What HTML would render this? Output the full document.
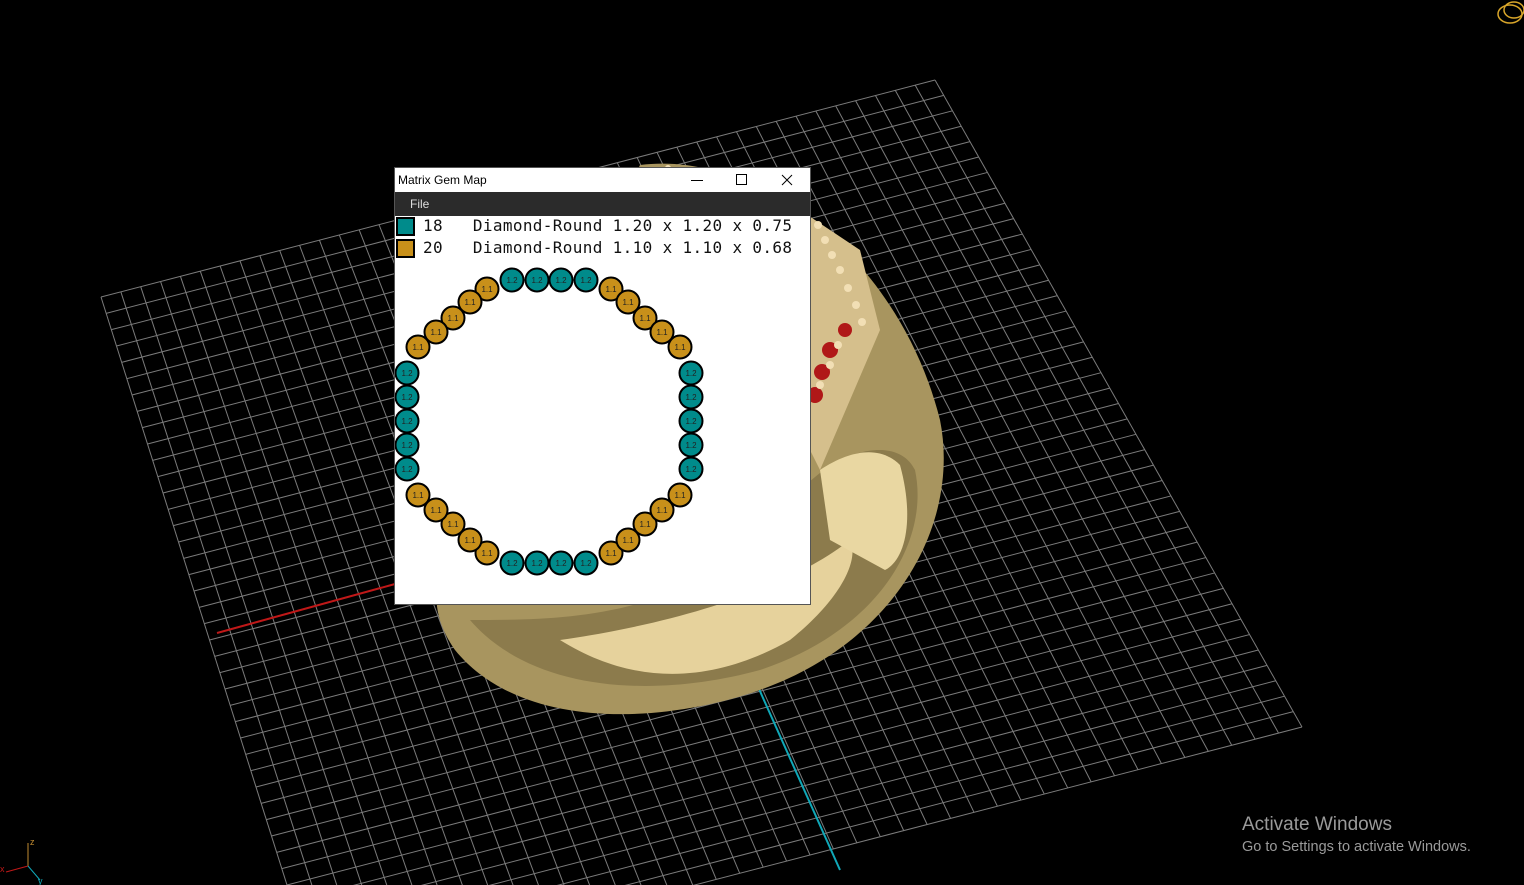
<!DOCTYPE html>
<html><head><style>
html,body{margin:0;padding:0;background:#000;width:1524px;height:885px;overflow:hidden;font-family:"Liberation Sans",sans-serif}
#dlg{position:absolute;left:395px;top:168px;width:415px;height:436px;background:#fff;box-shadow:0 0 0 1px #555}
#title{height:24px;background:#fff;font-size:12px;line-height:24px;padding-left:3px;color:#000;position:relative}
#menu{height:24px;background:#2b2b2b;color:#ddd;font-size:12px;line-height:24px;padding-left:15px}
.leg{position:absolute;left:1px;width:19px;height:19px;border:2px solid #000;box-sizing:border-box}
.lt{position:absolute;left:28px;font-family:"DejaVu Sans Mono","Liberation Mono",monospace;font-size:16px;letter-spacing:0.35px;white-space:pre;color:#111}
.aw{position:absolute;left:1242px;color:#9a9a9a}
</style></head><body>
<svg width="1524" height="885" style="position:absolute;left:0;top:0">
<g id="grid" stroke="#9a9a9a" stroke-width="1" opacity="0.8"></g>
<line x1="217" y1="633" x2="395" y2="584" stroke="#c01818" stroke-width="2"/>
<line x1="755" y1="680" x2="840" y2="870" stroke="#10a8b8" stroke-width="2"/>
<path d="M640 165 C760 150 900 260 940 420 C960 520 900 640 760 690 C660 725 520 730 455 650 C420 600 440 560 470 520 L640 165 Z" fill="#a8955f"/>
<path d="M470 620 C530 690 650 700 760 670 C880 630 930 540 915 470 C900 440 860 450 840 460 C800 480 760 540 700 580 C620 620 540 620 470 620 Z" fill="#8c7b4c"/>
<path d="M560 640 C640 690 720 680 790 640 C840 600 860 560 850 540 C800 580 700 620 560 640 Z" fill="#e6d29c"/>
<path d="M820 470 C850 450 880 445 900 465 C915 520 905 560 885 570 L830 540 Z" fill="#e9d7a2"/>
<path d="M800 210 L860 250 L880 330 L820 470 L800 430 Z" fill="#d5bf8c"/>
<g fill="#b01818"><circle cx="830" cy="350" r="8"/><circle cx="822" cy="372" r="8"/><circle cx="815" cy="395" r="8"/><circle cx="845" cy="330" r="7"/></g>
<g fill="#f2dfb5"><circle cx="818" cy="225" r="4"/><circle cx="825" cy="240" r="4"/><circle cx="832" cy="255" r="4"/><circle cx="840" cy="270" r="4"/><circle cx="848" cy="288" r="4"/><circle cx="856" cy="305" r="4"/><circle cx="862" cy="322" r="4"/><circle cx="838" cy="345" r="4"/><circle cx="830" cy="365" r="4"/><circle cx="820" cy="385" r="4"/><circle cx="656" cy="170" r="3"/><circle cx="668" cy="168" r="3"/></g>
<g stroke="#d9a62a" stroke-width="1.5" fill="none"><ellipse cx="1510" cy="14" rx="12" ry="9"/><ellipse cx="1514" cy="10" rx="10" ry="8"/></g>
<g font-size="9"><line x1="28" y1="843" x2="28" y2="866" stroke="#c08a30"/><line x1="28" y1="866" x2="6" y2="872" stroke="#c01818"/><line x1="28" y1="866" x2="40" y2="880" stroke="#10a8b8"/><text x="30" y="845" fill="#c08a30">z</text><text x="0" y="872" fill="#c01818">x</text><text x="38" y="884" fill="#10a8b8">y</text></g>
</svg>
<div id="dlg">
<div id="title">Matrix Gem Map
<svg width="120" height="24" style="position:absolute;right:0;top:0"><line x1="1" y1="12.5" x2="13" y2="12.5" stroke="#000"/><rect x="46.5" y="6.5" width="10" height="10" fill="none" stroke="#000"/><path d="M92 7 L102 17 M102 7 L92 17" stroke="#000"/></svg></div>
<div id="menu">File</div>
<div class="leg" style="top:49px;background:#008b8b"></div>
<div class="leg" style="top:71px;background:#c8901a"></div>
<div class="lt" style="top:48px">18   Diamond-Round 1.20 x 1.20 x 0.75</div>
<div class="lt" style="top:70px">20   Diamond-Round 1.10 x 1.10 x 0.68</div>
<svg id="gems" width="415" height="436" style="position:absolute;left:0;top:0"></svg>
</div>
<div class="aw" style="top:814px;font-size:19px">Activate Windows</div>
<div class="aw" style="top:839px;font-size:14.5px">Go to Settings to activate Windows.</div>
<script>
(function(){
var g=document.getElementById('grid'),ns='http://www.w3.org/2000/svg';
var A=[935,80],B=[1302,727],C=[318,983],D=[101,297],N=42;
function P(u,v){var x=(1-u)*(1-v)*D[0]+u*(1-v)*A[0]+u*v*B[0]+(1-u)*v*C[0];var y=(1-u)*(1-v)*D[1]+u*(1-v)*A[1]+u*v*B[1]+(1-u)*v*C[1];return [x,y];}
function L(p,q){var l=document.createElementNS(ns,'line');l.setAttribute('x1',p[0]);l.setAttribute('y1',p[1]);l.setAttribute('x2',q[0]);l.setAttribute('y2',q[1]);g.appendChild(l);}
for(var i=0;i<=N;i++){var t=i/N;L(P(t,0),P(t,1));L(P(0,t),P(1,t));}
var s=document.getElementById('gems'),ox=395,oy=168;
function gem(x,y,c,t){var e=document.createElementNS(ns,'circle');e.setAttribute('cx',x-ox);e.setAttribute('cy',y-oy);e.setAttribute('r',11.5);e.setAttribute('fill',c);e.setAttribute('stroke','#000');e.setAttribute('stroke-width','2');s.appendChild(e);var tx=document.createElementNS(ns,'text');tx.setAttribute('x',x-ox);tx.setAttribute('y',y-oy+3);tx.setAttribute('font-size','8');tx.setAttribute('text-anchor','middle');tx.setAttribute('fill','#222');tx.setAttribute('font-family','Liberation Sans');tx.textContent=t;s.appendChild(tx);}
var T='#008b8b',G='#c8901a';
[512,537,561,586].forEach(function(x){gem(x,280,T,'1.2');gem(x,563,T,'1.2');});
[373,397,421,445,469].forEach(function(y){gem(407,y,T,'1.2');gem(691,y,T,'1.2');});
var gl=[[487,289],[470,302],[453,318],[436,332],[418,347]];
gl.forEach(function(p){gem(p[0],p[1],G,'1.1');gem(1098-p[0],p[1],G,'1.1');gem(p[0],842-p[1],G,'1.1');gem(1098-p[0],842-p[1],G,'1.1');});
})();
</script>
</body></html>
